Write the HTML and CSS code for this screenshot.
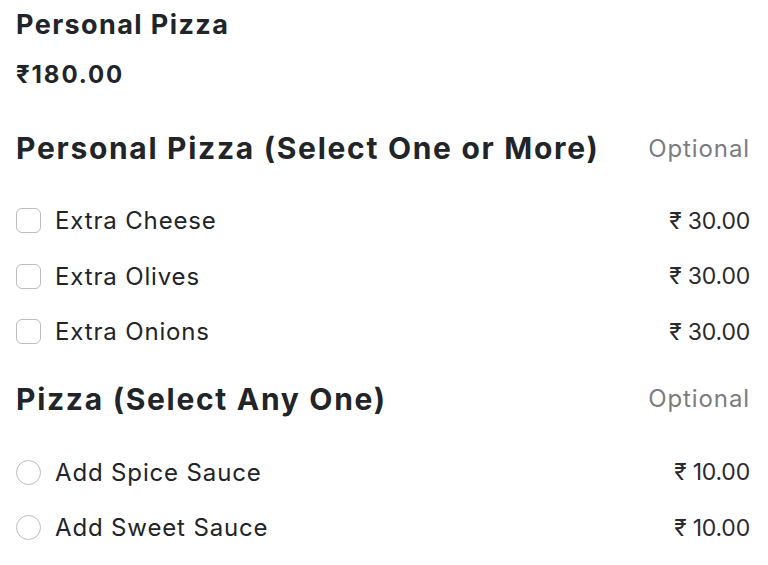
FILE: index.html
```html
<!DOCTYPE html>
<html lang="en">
  <head>
    <meta charset="UTF-8" />
    <meta name="viewport" content="width=device-width, initial-scale=1.0" />
    <title>Personal Pizza</title>
    <link rel="stylesheet" href="styles.css">
  </head>
  <body>
    <div id="item">
      <h1 class="name">Personal Pizza</h1>
      <p class="base-price">₹180.00</p>

      <div class="group">
        <div class="group-head">
          <h2>Personal Pizza (Select One or More)</h2>
          <span class="optional">Optional</span>
        </div>
        <label class="option">
          <span class="box"></span>
          <span class="label">Extra Cheese</span>
          <span class="price">₹ 30.00</span>
        </label>
        <label class="option">
          <span class="box"></span>
          <span class="label">Extra Olives</span>
          <span class="price">₹ 30.00</span>
        </label>
        <label class="option">
          <span class="box"></span>
          <span class="label">Extra Onions</span>
          <span class="price">₹ 30.00</span>
        </label>
      </div>

      <div class="group">
        <div class="group-head">
          <h2>Pizza (Select Any One)</h2>
          <span class="optional">Optional</span>
        </div>
        <label class="option">
          <span class="box round"></span>
          <span class="label">Add Spice Sauce</span>
          <span class="price">₹ 10.00</span>
        </label>
        <label class="option">
          <span class="box round"></span>
          <span class="label">Add Sweet Sauce</span>
          <span class="price">₹ 10.00</span>
        </label>
      </div>
    </div>
  </body>
</html>
```

FILE: styles.css
```css
* {
  padding: 0;
  margin: 0;
  box-sizing: border-box;
}
body {
  font-family: Inter, "Noto Sans", sans-serif;
  color: #212428;
  background: #fff;
}
#item {
  padding: 9px 18px 0 16px;
}
.name {
  font-size: 27px;
  font-weight: 700;
  line-height: 32px;
  letter-spacing: 1.4px;
}
.base-price {
  font-size: 24px;
  font-weight: 700;
  line-height: 32px;
  letter-spacing: 1.9px;
  margin-top: 18px;
}
.group-head {
  display: flex;
  justify-content: space-between;
  align-items: center;
  height: 40px;
  margin-top: 37px;
  margin-bottom: 25px;
}
.group + .group .group-head {
  margin-top: 19px;
  margin-bottom: 26px;
}
.group-head h2 {
  font-size: 30px;
  font-weight: 700;
  letter-spacing: 1.7px;
}
.optional {
  font-size: 24px;
  letter-spacing: 0.9px;
  color: #7c7c80;
}
.option {
  display: flex;
  align-items: center;
  height: 55.5px;
  font-size: 24px;
  letter-spacing: 0.85px;
}
.box {
  width: 25px;
  height: 25px;
  border: 1.5px solid #bcbcc1;
  border-radius: 6px;
  margin-right: 14px;
}
.box.round {
  border-radius: 50%;
}
.label {
  flex: 1;
}
.price {
  font-size: 23px;
  letter-spacing: -0.2px;
  color: #2a2a2e;
}
```
